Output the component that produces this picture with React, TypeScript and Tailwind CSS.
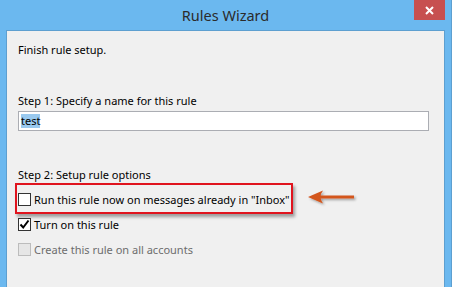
import React from "react";

function Check({ checked, disabled }: { checked?: boolean; disabled?: boolean }) {
  return (
    <div
      className={`w-[13px] h-[13px] border flex items-center justify-center shrink-0 ${
        disabled ? "border-[#bcbcbc] bg-[#e6e6e6]" : "border-[#333333] bg-white"
      }`}
    >
      {checked && (
        <svg width="11" height="11" viewBox="0 0 11 11">
          <path d="M1.5 5.5 L4.2 8.5 L9.5 1.5" fill="none" stroke="#000" strokeWidth="2" />
        </svg>
      )}
    </div>
  );
}

function Arrow() {
  return (
    <svg width="50" height="18" viewBox="0 0 50 18" className="absolute left-[290px] top-[2px]">
      <defs>
        <filter id="sh" x="-20%" y="-50%" width="140%" height="200%">
          <feDropShadow dx="1.5" dy="1.5" stdDeviation="1" floodColor="#000" floodOpacity="0.35" />
        </filter>
      </defs>
      <g filter="url(#sh)">
        <path d="M12 6.6 L46 6.6 L46 9.6 L12 9.6 Z" fill="#d3561f" />
        <path d="M0 8 L15 1.5 Q10 8 15 14.5 Z" fill="#d3561f" />
      </g>
    </svg>
  );
}

export default function App() {
  return (
    <div
      className="w-[452px] h-[287px] bg-[#6bb8ef] flex flex-col border-r border-[#5d9fd0] overflow-hidden"
      style={{ fontFamily: '"Noto Sans", "Open Sans", sans-serif' }}
    >
      {/* title bar */}
      <div className="relative h-[30px] shrink-0 flex items-center justify-center">
        <span className="text-[14.5px] text-[#2b2b2b] mt-[1px]">Rules Wizard</span>
        <div className="absolute top-0 right-[6px] w-[31px] h-[20px] bg-[#c75050] flex items-center justify-center">
          <svg width="9" height="9" viewBox="0 0 9 9">
            <path d="M1 1 L8 8 M8 1 L1 8" stroke="#fff" strokeWidth="2" />
          </svg>
        </div>
      </div>

      {/* client area */}
      <div className="flex-1 ml-[6px] mr-[6px] bg-[#f0f0f0] border-l border-t border-r border-[#5d9fd0] pl-[11px] pr-[15px] text-[11px] leading-[15px] text-black">
        <div className="mt-[11px]">Finish rule setup.</div>

        <div className="mt-[36px]">Step 1: Specify a name for this rule</div>
        <div className="mt-[3px] h-[20px] border border-[#abadb3] bg-white flex items-center px-[2px]">
          <span className="bg-[#99c9ef] leading-[14px]">test</span>
        </div>

        <div className="mt-[36px]">Step 2: Setup rule options</div>

        <div className="relative mt-[5px] h-[25px] flex items-center gap-[3px]">
          <Check />
          <span>Run this rule now on messages already in "Inbox"</span>
          <div className="absolute -left-[3px] -top-[4px] w-[278px] h-[31px] border-2 border-[#e0141e] shadow-[2px_3px_3px_rgba(0,0,0,0.35)]" />
          <Arrow />
        </div>
        <div className="h-[25px] flex items-center gap-[3px]">
          <Check checked />
          <span>Turn on this rule</span>
        </div>
        <div className="h-[25px] flex items-center gap-[3px] text-[#6d6d6d]">
          <Check disabled />
          <span>Create this rule on all accounts</span>
        </div>
      </div>
    </div>
  );
}
